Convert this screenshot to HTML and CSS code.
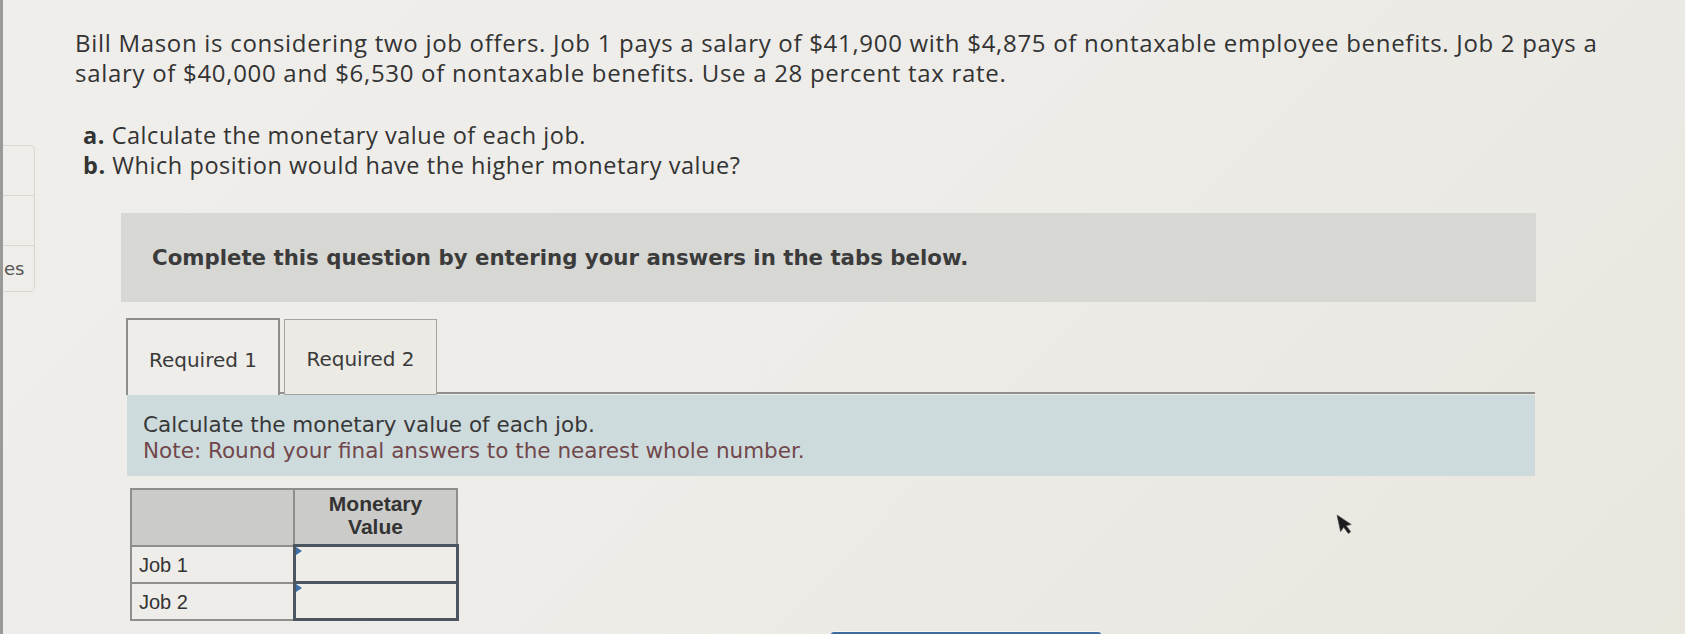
FILE: index.html
```html
<!DOCTYPE html>
<html lang="en">
<head>
<meta charset="utf-8">
<title>Job offers</title>
<link rel="stylesheet" href="styles.css">
</head>
<body>
<div class="page">
  <aside class="side">
    <div class="side-cell"></div>
    <div class="side-cell"></div>
    <div class="side-cell last">es</div>
  </aside>
  <main class="content">
    <p class="intro">Bill Mason is considering two job offers. Job 1 pays a salary of $41,900 with $4,875 of nontaxable employee benefits. Job 2 pays a<br>salary of $40,000 and $6,530 of nontaxable benefits. Use a 28 percent tax rate.</p>
    <ol class="parts">
      <li><b>a.</b> Calculate the monetary value of each job.</li>
      <li><b>b.</b> Which position would have the higher monetary value?</li>
    </ol>
    <div class="banner">Complete this question by entering your answers in the tabs below.</div>
    <div class="tabs">
      <div class="tab active">Required 1</div>
      <div class="tab-gap"></div>
      <div class="tab">Required 2</div>
      <div class="tab-fill"></div>
    </div>
    <div class="instr">
      <p>Calculate the monetary value of each job.</p>
      <p class="note">Note: Round your final answers to the nearest whole number.</p>
    </div>
    <table class="grid">
      <thead>
        <tr><th class="blank"></th><th>Monetary<br>Value</th></tr>
      </thead>
      <tbody>
        <tr><td class="label">Job 1</td><td class="input"></td></tr>
        <tr><td class="label">Job 2</td><td class="input"></td></tr>
      </tbody>
    </table>
    <div class="nav"><div class="nav-btn"></div></div>
  </main>
</div>
<svg class="cursor" width="16" height="24" viewBox="0 0 16 24"><path d="M1 1 L1 18 L5 14.5 L8.2 21.5 L11 20.3 L7.8 13.4 L13 13.2 Z" fill="#1c1c1e" stroke="#555" stroke-width="0.6"/></svg>
</body>
</html>
```

FILE: styles.css
```css
html, body {
  margin: 0;
  padding: 0;
}
body {
  width: 1685px;
  height: 634px;
  overflow: hidden;
  background: linear-gradient(135deg, #efeeeb 0%, #edece8 50%, #e9e6de 100%);
  color: #3a3a3a;
  position: relative;
}
.page {
  display: flex;
  align-items: flex-start;
  border-left: 3px solid #9a9a98;
  box-sizing: border-box;
  height: 634px;
}
.side {
  width: 31px;
  margin-top: 145px;
  border: 1px solid #d8d7d2;
  border-left: none;
  border-radius: 0 5px 5px 0;
  display: flex;
  flex-direction: column;
}
.side-cell {
  height: 49px;
  border-bottom: 1px solid #d8d7d2;
}
.side-cell.last {
  border-bottom: none;
  height: 45px;
  font-family: "DejaVu Sans", Verdana, sans-serif;
  font-size: 18px;
  color: #555;
  display: flex;
  align-items: center;
  padding-left: 1px;
}
.content {
  padding-left: 40px;
  flex: 1;
}
.intro {
  margin: 0;
  padding-top: 28px;
  font-family: "Open Sans", Lato, sans-serif;
  font-size: 24px;
  line-height: 30px;
  letter-spacing: 0.7px;
  color: #333;
  white-space: nowrap;
}
.parts {
  list-style: none;
  margin: 32px 0 0 8px;
  padding: 0;
  font-family: "Open Sans", Lato, sans-serif;
  font-size: 23.5px;
  line-height: 30px;
  letter-spacing: 0.55px;
  color: #333;
}
.parts b {
  font-weight: 700;
}
.banner {
  margin: 33px 0 0 46px;
  width: 1415px;
  height: 89px;
  box-sizing: border-box;
  padding: 0 0 0 31px;
  background: #d7d7d4;
  display: flex;
  align-items: center;
  font-family: "DejaVu Sans", Verdana, sans-serif;
  font-weight: bold;
  font-size: 21.3px;
  color: #3b3b3b;
}
.tabs {
  display: flex;
  align-items: flex-end;
  margin: 16px 0 0 51px;
  width: 1409px;
  height: 77px;
}
.tab {
  box-sizing: border-box;
  width: 153px;
  height: 76px;
  border: 1px solid #a3a3a0;
  display: flex;
  align-items: center;
  justify-content: center;
  padding-top: 4px;
  font-family: "DejaVu Sans", Verdana, sans-serif;
  font-size: 20px;
  color: #3a3a3a;
  background: #ebeae5;
}
.tab.active {
  width: 154px;
  height: 77px;
  border: 2px solid #8d8d8a;
  border-bottom: none;
  background: #eeede9;
}
.tab-gap {
  width: 4px;
  height: 0;
  border-bottom: 2px solid #8f8f8c;
  margin-bottom: 1px;
}
.tab-fill {
  flex: 1;
  height: 0;
  border-bottom: 2px solid #8f8f8c;
  margin-bottom: 1px;
}
.instr {
  margin: 0 0 0 52px;
  width: 1408px;
  box-sizing: border-box;
  height: 81px;
  padding: 17px 0 0 16px;
  background: #cedbdd;
  font-family: "DejaVu Sans", Verdana, sans-serif;
  font-size: 21.5px;
  line-height: 26px;
  color: #383838;
}
.instr p {
  margin: 0;
}
.instr .note {
  color: #71474b;
}
.grid {
  margin: 12px 0 0 55px;
  border-collapse: collapse;
  font-family: "Liberation Sans", Arial, sans-serif;
  color: #333;
}
.grid th {
  background: #cbcbc9;
  border: 2px solid #8e8e8c;
  width: 161px;
  height: 52px;
  font-size: 21px;
  line-height: 23px;
  font-weight: bold;
  text-align: center;
  vertical-align: top;
  padding: 2px 0 0 0;
}
.grid td {
  border: 2px solid #8e8e8c;
  height: 33px;
  padding: 0;
}
.grid td.label {
  font-size: 20px;
  padding: 2px 0 0 7px;
  vertical-align: middle;
}
.grid td.input {
  border: 3px solid #4b5661;
  background: #eeede8;
  position: relative;
}
.grid td.input::before {
  content: "";
  position: absolute;
  left: 0;
  top: 0;
  border-left: 6px solid #3c6ea8;
  border-top: 4px solid transparent;
  border-bottom: 4px solid transparent;
}
.nav {
  margin: 10px 0 0 756px;
}
.nav-btn {
  width: 270px;
  height: 20px;
  background: #3e6ba2;
  border-top: 1px solid #f7f7f7;
  border-radius: 3px 3px 0 0;
}
.cursor {
  position: absolute;
  left: 1336px;
  top: 514px;
  transform: rotate(-12deg);
  transform-origin: 1px 1px;
}
```
